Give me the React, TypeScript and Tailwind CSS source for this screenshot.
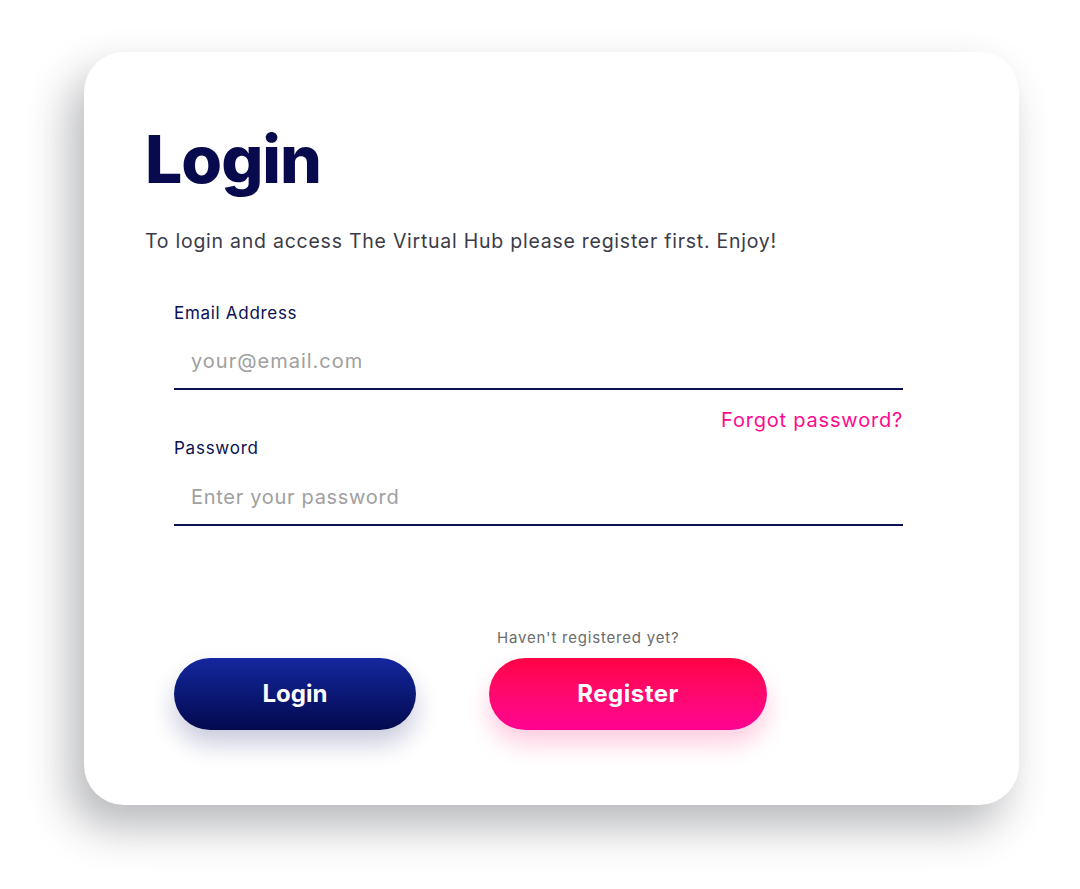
import React from 'react';

const App = () => {
  return (
    <div className="min-h-screen w-full bg-white pt-[52px] pl-[84px]" style={{ fontFamily: 'Inter, "Noto Sans", sans-serif' }}>
      <div className="w-[935px] h-[753px] rounded-[40px] bg-white shadow-[-14px_22px_44px_rgba(40,44,52,0.33)] pt-[74px] px-[61px]">
        {/* Heading */}
        <h1 className="text-[66px] leading-none font-extrabold text-[#070b4d] tracking-[-1px]">Login</h1>
        <p className="mt-[40px] text-[19.5px] leading-none tracking-[0.75px] text-[#3b3b48]">
          To login and access The Virtual Hub please register first. Enjoy!
        </p>

        {/* Form */}
        <form className="mt-[53px] ml-[29px] w-[729px]" onSubmit={e => e.preventDefault()}>
          <label className="block text-[17px] leading-none tracking-[0.7px] text-[#0b1052]">Email Address</label>
          <input
            type="email"
            placeholder="your@email.com"
            className="mt-[27px] block w-full border-b-2 border-[#0b1052] bg-transparent px-[17px] pb-[15px] text-[20px] leading-none tracking-[1px] text-[#333] placeholder:text-[#a0a0a0] outline-none"
          />
          <div className="mt-[19px] text-right">
            <a href="#" className="text-[20px] leading-none tracking-[0.8px] text-[#ff0a8f]">Forgot password?</a>
          </div>
          <label className="mt-[7px] block text-[17px] leading-none tracking-[0.75px] text-[#0b1052]">Password</label>
          <input
            type="password"
            placeholder="Enter your password"
            className="mt-[28px] block w-full border-b-2 border-[#0b1052] bg-transparent px-[17px] pb-[15px] text-[20px] leading-none tracking-[0.7px] text-[#333] placeholder:text-[#a0a0a0] outline-none"
          />

          {/* Actions */}
          <div className="mt-[104px] flex items-end gap-[73px]">
            <button className="h-[72px] w-[242px] rounded-full bg-gradient-to-b from-[#14279f] to-[#040a4f] text-[24px] font-bold text-white shadow-[0_14px_24px_rgba(10,20,100,0.22)]">
              Login
            </button>
            <div className="flex flex-col">
              <span className="mb-[13px] ml-[8px] text-[15px] leading-none tracking-[0.8px] text-[#6b6b6b]">Haven't registered yet?</span>
              <button className="h-[72px] w-[278px] rounded-full bg-gradient-to-b from-[#ff0044] to-[#ff0092] text-[24px] font-bold tracking-[0.5px] text-white shadow-[0_14px_24px_rgba(255,0,100,0.2)]">
                Register
              </button>
            </div>
          </div>
        </form>
      </div>
    </div>
  );
};

export default App;
